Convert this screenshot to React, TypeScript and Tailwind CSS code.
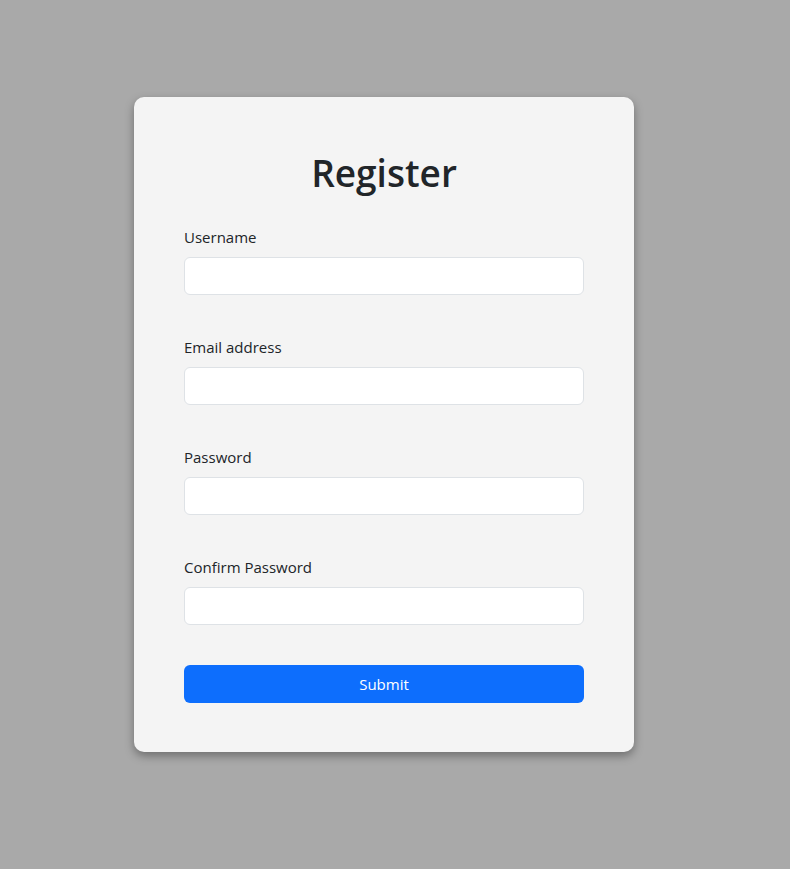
export default function App() {
  const fields = [
    { label: 'Username', type: 'text' },
    { label: 'Email address', type: 'email' },
    { label: 'Password', type: 'password' },
    { label: 'Confirm Password', type: 'password' },
  ]

  return (
    <div
      className="min-h-[869px] w-full bg-[#a9a9a9] pt-[97px] pl-[134px]"
      style={{ fontFamily: '"Open Sans", "Noto Sans", sans-serif' }}
    >
      <div className="w-[500px] rounded-[10px] bg-[#f4f4f4] px-[50px] pt-[52px] pb-[49px] shadow-[0_4px_10px_rgba(0,0,0,0.35)]">
        <h1 className="mb-[28px] text-center text-[37px] leading-[48px] font-semibold text-[#212529]">Register</h1>
        <form className="flex flex-col gap-[40px]" onSubmit={e => e.preventDefault()}>
          {fields.map(f => (
            <div key={f.label}>
              <label className="mb-2 block text-[15px] leading-6 text-[#212529]">{f.label}</label>
              <input
                type={f.type}
                className="block h-[38px] w-full rounded-[6px] border border-[#dee2e6] bg-white px-3 text-base text-[#212529] outline-none"
              />
            </div>
          ))}
          <button
            type="submit"
            className="h-[38px] w-full rounded-[6px] bg-[#0d6efd] text-[15px] text-white"
          >
            Submit
          </button>
        </form>
      </div>
    </div>
  )
}
